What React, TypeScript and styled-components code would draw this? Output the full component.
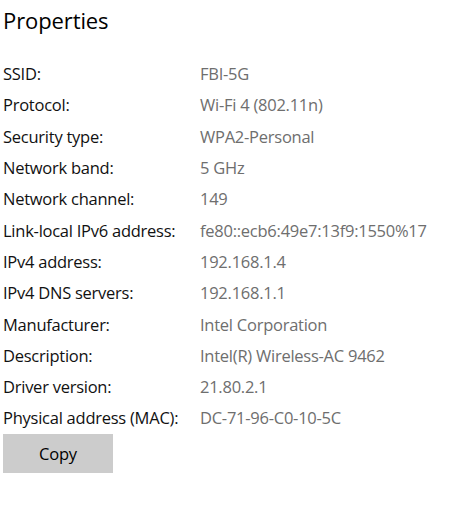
import React from 'react';
import styled, { createGlobalStyle } from 'styled-components';

const GlobalStyle = createGlobalStyle`
  body {
    margin: 0;
    background: #ffffff;
    font-family: 'Open Sans', 'Noto Sans', sans-serif;
  }
`;

const Page = styled.div`
  padding: 6px 3px 0;
  width: 474px;
  height: 515px;
  box-sizing: border-box;
`;

const Title = styled.h1`
  font-weight: 400;
  font-size: 22px;
  line-height: 28px;
  margin: 0 0 24px;
  color: #000000;
  letter-spacing: -0.1px;
`;

const Grid = styled.div`
  display: grid;
  grid-template-columns: 197px auto;
  grid-auto-rows: 31.3px;
  align-items: center;
`;

const Label = styled.div`
  font-size: 16.5px;
  color: #111111;
  letter-spacing: -0.25px;
  white-space: nowrap;
`;

const Value = styled.div`
  font-size: 16.5px;
  color: #6e6e6e;
  letter-spacing: -0.25px;
  white-space: nowrap;
`;

const CopyButton = styled.button`
  margin-top: 0;
  width: 110px;
  height: 39px;
  border: none;
  background: #cccccc;
  color: #000000;
  font-family: inherit;
  font-size: 16.5px;
  letter-spacing: -0.2px;
  padding: 0;
`;

const rows: [string, string][] = [
  ['SSID:', 'FBI-5G'],
  ['Protocol:', 'Wi-Fi 4 (802.11n)'],
  ['Security type:', 'WPA2-Personal'],
  ['Network band:', '5 GHz'],
  ['Network channel:', '149'],
  ['Link-local IPv6 address:', 'fe80::ecb6:49e7:13f9:1550%17'],
  ['IPv4 address:', '192.168.1.4'],
  ['IPv4 DNS servers:', '192.168.1.1'],
  ['Manufacturer:', 'Intel Corporation'],
  ['Description:', 'Intel(R) Wireless-AC 9462'],
  ['Driver version:', '21.80.2.1'],
  ['Physical address (MAC):', 'DC-71-96-C0-10-5C'],
];

const App: React.FC = () => {
  return (
    <Page>
      <GlobalStyle />
      <Title>Properties</Title>
      <Grid>
        {rows.map(([label, value]) => (
          <React.Fragment key={label}>
            <Label>{label}</Label>
            <Value>{value}</Value>
          </React.Fragment>
        ))}
      </Grid>
      <CopyButton>Copy</CopyButton>
    </Page>
  );
};

export default App;
